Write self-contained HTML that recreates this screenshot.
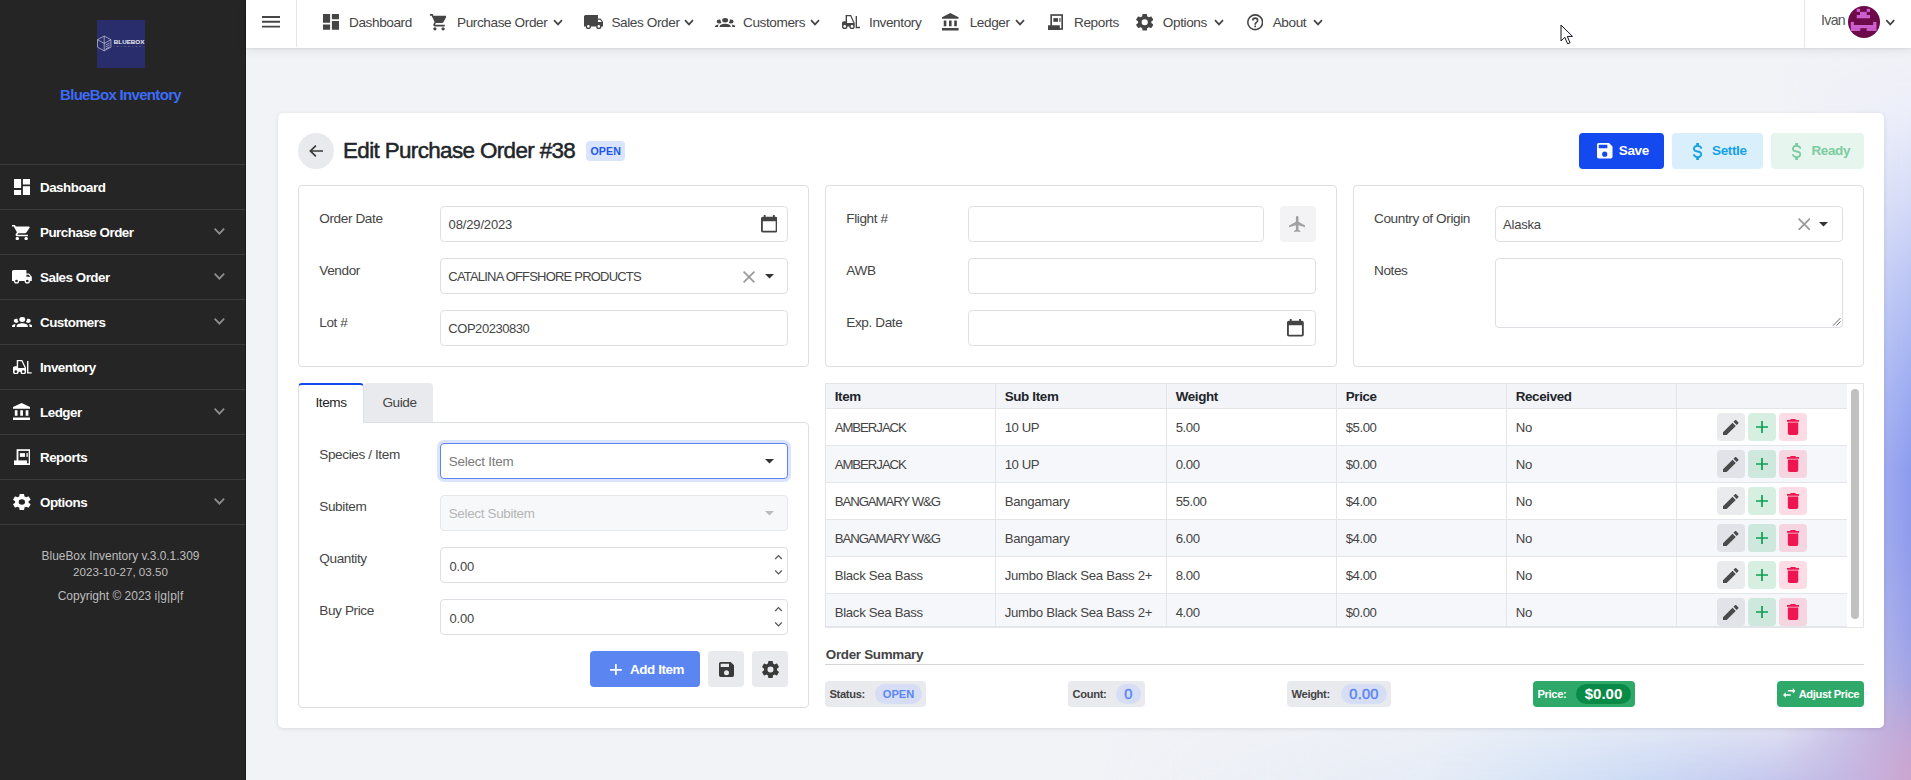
<!DOCTYPE html><html><head><meta charset="utf-8"><style>*{box-sizing:border-box;margin:0;padding:0}
html,body{width:1911px;height:780px;overflow:hidden}
body{position:relative;background:#f2f3f7;font-family:"Liberation Sans",sans-serif;color:#444}
.a{position:absolute}
.t{position:absolute;line-height:1;white-space:nowrap}
svg{display:block}
#blob{position:absolute;left:0;top:0;width:1911px;height:780px;overflow:hidden}
#rs{position:absolute;left:1780px;top:40px;width:131px;height:740px;
 -webkit-mask-image:linear-gradient(to right, transparent 0px, rgba(0,0,0,0.8) 100px, #000 131px);
 background:linear-gradient(to bottom, rgba(236,238,249,0) 0px, #eceef9 70px, #d8ddf7 150px, #b8c3f4 250px, #9dabf1 350px, #8d9bee 430px, #8f9bec 500px, #9ca2e7 600px, #aea6de 680px, #bea7d6 740px);}
#rs2{display:none}
#bs{position:absolute;left:1100px;top:680px;width:811px;height:100px;
 -webkit-mask-image:linear-gradient(to bottom, transparent 0px, rgba(0,0,0,0.45) 48px, rgba(0,0,0,0.75) 75px, #000 100px);
 background:linear-gradient(to right, rgba(234,238,246,0) 0px, #e6ecf6 330px, #d6e3f6 450px, #cbd8f4 560px, #c6caee 660px, #c3b6e2 750px, #cca6d0 811px);}
#side{position:absolute;left:0;top:0;width:246px;height:780px;background:#252526;border-right:1px solid #1c1c1c}
.mi{position:absolute;left:0;width:245px;height:45px;border-bottom:1px solid #3a3a3b}
.mi .tx{position:absolute;left:40px;top:15.7px;letter-spacing:-0.5px;font-size:13.4px;font-weight:bold;color:#fff;line-height:1;white-space:nowrap}
#top{position:absolute;left:0;top:0;width:1911px;height:48px}
#topbg{position:absolute;left:246px;top:0;width:1665px;height:48px;background:#fff;box-shadow:0 1px 2px rgba(0,0,0,0.06),0 3px 10px rgba(0,0,0,0.07)}
.nv{font-size:13.6px;letter-spacing:-0.4px;color:#454545}
#card{position:absolute;left:278px;top:113px;width:1606px;height:615px;background:#fff;border-radius:5px;box-shadow:0 1px 4px rgba(0,0,0,0.10)}
.pn{position:absolute;border:1px solid #dcdfe4;border-radius:4px;background:#fff}
.in{position:absolute;border:1px solid #dcdfe4;border-radius:4px;background:#fff;height:36px}
.lb{font-size:13px;color:#444}
.iv{font-size:12.4px;color:#444}
</style></head><body>
<div id="blob"><div id="rs"></div><div id="rs2"></div><div id="bs"></div></div>
<div id="side">
<div class="a" style="left:97px;top:20px;width:48px;height:48px;background:#2a2d6b">
<svg class="a" style="left:0;top:0" width="48" height="48" viewBox="0 0 48 48">
<g fill="none" stroke="#e4e4ee" stroke-width="0.6">
<path d="M7.2,16 L0.5,19.7 L0.5,27.2 L7.2,30.8 L13.9,27.2 L13.9,19.7 Z M0.5,19.7 L7.2,23.4 L13.9,19.7 M7.2,16 L7.2,30.8"/>
<path d="M8.6,25 L12.6,22.8 M8.6,27 L12.6,24.8 M8.6,29 L12.6,26.8"/>
</g>
<text x="16.8" y="24.3" font-family="Liberation Sans" font-weight="bold" font-size="6" fill="#f0f0f6" textLength="30.6" lengthAdjust="spacingAndGlyphs">BLUEBOX</text>
<text x="17" y="27.2" font-family="Liberation Sans" font-size="1.9" fill="#b8b8d0" textLength="30.5" lengthAdjust="spacing">I N V E N T O R Y</text>
</svg></div>
<div class="t" style="left:60px;top:87.3px;font-size:15px;letter-spacing:-0.68px;font-weight:bold;color:#3c6bf7">BlueBox Inventory</div>
<div class="a" style="left:0;top:164px;width:245px;height:1px;background:#3a3a3b"></div>
<div class="mi" style="top:165px"><span class="tx">Dashboard</span></div>
<svg class="a" style="left:14px;top:178.7px" width="16" height="16.4" viewBox="3 3 18 18" preserveAspectRatio="none"><path fill="#fff" d="M13,3V9H21V3M13,21H21V11H13M3,21H11V15H3M3,13H11V3H3V13Z"/></svg>
<div class="mi" style="top:210px"><span class="tx">Purchase Order</span></div>
<svg class="a" style="left:12.3px;top:224.9px" width="17.7" height="15.1" viewBox="1 2 20 20" preserveAspectRatio="none"><path fill="#fff" d="M17,18C15.89,18 15,18.89 15,20A2,2 0 0,0 17,22A2,2 0 0,0 19,20C19,18.89 18.1,18 17,18M1,2V4H3L6.6,11.59L5.24,14.04C5.09,14.32 5,14.65 5,15A2,2 0 0,0 7,17H19V15H7.42A0.25,0.25 0 0,1 7.17,14.75C7.17,14.7 7.18,14.66 7.2,14.63L8.1,13H15.55C16.3,13 16.96,12.58 17.3,11.97L20.88,5.5C20.95,5.34 21,5.17 21,5A1,1 0 0,0 20,4H5.21L4.27,2M7,18C5.89,18 5,18.89 5,20A2,2 0 0,0 7,22A2,2 0 0,0 9,20C9,18.89 8.1,18 7,18Z"/></svg>
<svg class="a" style="left:214px;top:228.3px" width="10.8" height="7" viewBox="6 8.58 12 7.42" preserveAspectRatio="none"><path fill="#8d8d8d" d="M7.41,8.58L12,13.17L16.59,8.58L18,10L12,16L6,10L7.41,8.58Z"/></svg>
<div class="mi" style="top:255px"><span class="tx">Sales Order</span></div>
<svg class="a" style="left:12px;top:270px" width="19.8" height="13.6" viewBox="1 4 22 16" preserveAspectRatio="none"><path fill="#fff" d="M18,18.5A1.5,1.5 0 0,1 16.5,17A1.5,1.5 0 0,1 18,15.5A1.5,1.5 0 0,1 19.5,17A1.5,1.5 0 0,1 18,18.5M19.5,9.5L21.46,12H17V9.5M6,18.5A1.5,1.5 0 0,1 4.5,17A1.5,1.5 0 0,1 6,15.5A1.5,1.5 0 0,1 7.5,17A1.5,1.5 0 0,1 6,18.5M20,8H17V4H3C1.89,4 1,4.89 1,6V17H3A3,3 0 0,0 6,20A3,3 0 0,0 9,17H15A3,3 0 0,0 18,20A3,3 0 0,0 21,17H23V12L20,8Z"/></svg>
<svg class="a" style="left:214px;top:273.3px" width="10.8" height="7" viewBox="6 8.58 12 7.42" preserveAspectRatio="none"><path fill="#8d8d8d" d="M7.41,8.58L12,13.17L16.59,8.58L18,10L12,16L6,10L7.41,8.58Z"/></svg>
<div class="mi" style="top:300px"><span class="tx">Customers</span></div>
<svg class="a" style="left:11.8px;top:317px" width="20.5" height="10.2" viewBox="0 5.5 24 14.5" preserveAspectRatio="none"><path fill="#fff" d="M12,5.5A3.5,3.5 0 0,1 15.5,9A3.5,3.5 0 0,1 12,12.5A3.5,3.5 0 0,1 8.5,9A3.5,3.5 0 0,1 12,5.5M5,8C5.56,8 6.08,8.15 6.53,8.42C6.38,9.85 6.8,11.27 7.66,12.38C7.16,13.34 6.16,14 5,14A3,3 0 0,1 2,11A3,3 0 0,1 5,8M19,8A3,3 0 0,1 22,11A3,3 0 0,1 19,14C17.84,14 16.84,13.34 16.34,12.38C17.2,11.27 17.62,9.85 17.47,8.42C17.92,8.15 18.44,8 19,8M5.5,18.25C5.5,16.18 8.41,14.5 12,14.5C15.59,14.5 18.5,16.180 18.5,18.25V20H5.5V18.25M0,20V18.5C0,17.11 1.89,15.94 4.450,15.6C3.86,16.28 3.5,17.22 3.5,18.25V20H0M24,20H20.5V18.25C20.5,17.22 20.14,16.28 19.55,15.6C22.11,15.94 24,17.11 24,18.5V20Z"/></svg>
<svg class="a" style="left:214px;top:318.3px" width="10.8" height="7" viewBox="6 8.58 12 7.42" preserveAspectRatio="none"><path fill="#8d8d8d" d="M7.41,8.58L12,13.17L16.59,8.58L18,10L12,16L6,10L7.41,8.58Z"/></svg>
<div class="mi" style="top:345px"><span class="tx">Inventory</span></div>
<svg class="a" style="left:13px;top:359.8px" width="18.7" height="14.4" viewBox="2 4 20 16" preserveAspectRatio="none"><path fill="#fff" d="M6,4V11H4C2.89,11 2,11.89 2,13V17A3,3 0 0,0 5,20A3,3 0 0,0 8,17H10A3,3 0 0,0 13,20A3,3 0 0,0 16,17V13L12,4H6M17,5V19H22V17.5H18.5V5H17M7.5,5.5H11.2L14.5,13H7.5V5.5M5,15.5A1.5,1.5 0 0,1 6.5,17A1.5,1.5 0 0,1 5,18.5A1.5,1.5 0 0,1 3.5,17A1.5,1.5 0 0,1 5,15.5M13,15.5A1.5,1.5 0 0,1 14.5,17A1.5,1.5 0 0,1 13,18.5A1.5,1.5 0 0,1 11.5,17A1.5,1.5 0 0,1 13,15.5Z"/></svg>
<div class="mi" style="top:390px"><span class="tx">Ledger</span></div>
<svg class="a" style="left:13px;top:403px" width="17.2" height="16.9" viewBox="2 1 19 21" preserveAspectRatio="none"><path fill="#fff" d="M11.5,1L2,6V8H21V6M16,10V17H19V10M2,22H21V19H2M10,10V17H13V10M4,10V17H7V10H4Z"/></svg>
<svg class="a" style="left:214px;top:408.3px" width="10.8" height="7" viewBox="6 8.58 12 7.42" preserveAspectRatio="none"><path fill="#8d8d8d" d="M7.41,8.58L12,13.17L16.59,8.58L18,10L12,16L6,10L7.41,8.58Z"/></svg>
<div class="mi" style="top:435px"><span class="tx">Reports</span></div>
<svg class="a" style="left:13.7px;top:449px" width="16.5" height="16.2" viewBox="0 0 14.6 15.6" preserveAspectRatio="none"><rect x="3.1" y="1" width="10.7" height="13.6" fill="none" stroke="#fff" stroke-width="1.6"/><rect x="5.2" y="4" width="4.5" height="3.6" fill="#fff"/><rect x="11" y="4" width="1.2" height="3.6" fill="#fff"/><rect x="0" y="11" width="11.5" height="4.6" fill="#fff"/></svg>
<div class="mi" style="top:480px"><span class="tx">Options</span></div>
<svg class="a" style="left:13.3px;top:494px" width="17.7" height="16" viewBox="2.2 2 19.6 20" preserveAspectRatio="none"><path fill="#fff" d="M12,15.5A3.5,3.5 0 0,1 8.5,12A3.5,3.5 0 0,1 12,8.5A3.5,3.5 0 0,1 15.5,12A3.5,3.5 0 0,1 12,15.5M19.43,12.97C19.47,12.65 19.5,12.33 19.5,12C19.5,11.67 19.47,11.34 19.43,11L21.54,9.37C21.73,9.22 21.78,8.95 21.66,8.73L19.66,5.27C19.54,5.05 19.27,4.96 19.05,5.05L16.56,6.05C16.04,5.66 15.5,5.32 14.87,5.07L14.5,2.42C14.46,2.18 14.25,2 14,2H10C9.75,2 9.54,2.18 9.5,2.42L9.13,5.07C8.5,5.32 7.96,5.66 7.44,6.05L4.95,5.05C4.73,4.96 4.460,5.05 4.34,5.27L2.34,8.73C2.21,8.95 2.27,9.22 2.46,9.37L4.57,11C4.53,11.34 4.5,11.67 4.5,12C4.5,12.33 4.53,12.65 4.57,12.97L2.46,14.63C2.27,14.78 2.21,15.05 2.34,15.27L4.34,18.73C4.46,18.95 4.73,19.03 4.95,18.95L7.44,17.94C7.96,18.34 8.5,18.68 9.13,18.93L9.5,21.58C9.54,21.82 9.75,22 10,22H14C14.25,22 14.46,21.82 14.5,21.58L14.87,18.93C15.5,18.67 16.04,18.34 16.56,17.94L19.05,18.95C19.27,19.03 19.54,18.95 19.66,18.73L21.66,15.27C21.78,15.05 21.73,14.78 21.54,14.63L19.43,12.97Z"/></svg>
<svg class="a" style="left:214px;top:498.3px" width="10.8" height="7" viewBox="6 8.58 12 7.42" preserveAspectRatio="none"><path fill="#8d8d8d" d="M7.41,8.58L12,13.17L16.59,8.58L18,10L12,16L6,10L7.41,8.58Z"/></svg>
<div class="t" style="left:0;width:241px;text-align:center;top:551px;font-size:11.9px;color:#bdbdbd">BlueBox Inventory v.3.0.1.309</div>
<div class="t" style="left:0;width:241px;text-align:center;top:566px;font-size:11.6px;color:#bdbdbd">2023-10-27, 03.50</div>
<div class="t" style="left:0;width:241px;text-align:center;top:590px;font-size:12px;color:#bdbdbd">Copyright © 2023 i|g|p|f</div>
</div>
<div id="top"><div id="topbg"></div>
<div class="a" style="left:296px;top:0;width:1px;height:47px;background:#e6e6e6"></div>
<div class="a" style="left:1804px;top:0;width:1px;height:47px;background:#e6e6e6"></div>
<svg class="a" style="left:262px;top:16px" width="18" height="11.6" viewBox="3 6 18 12" preserveAspectRatio="none"><path fill="#454545" d="M3,6H21V8H3V6M3,11H21V13H3V11M3,16H21V18H3V16Z"/></svg>
<div class="t nv" style="left:349px;top:15.5px">Dashboard</div>
<svg class="a" style="left:323px;top:14.1px" width="16" height="15.7" viewBox="3 3 18 18" preserveAspectRatio="none"><path fill="#454545" d="M13,3V9H21V3M13,21H21V11H13M3,21H11V15H3M3,13H11V3H3V13Z"/></svg>
<div class="t nv" style="left:457px;top:15.5px">Purchase Order</div>
<svg class="a" style="left:429.6px;top:14px" width="16.4" height="16.5" viewBox="1 2 20 20" preserveAspectRatio="none"><path fill="#454545" d="M17,18C15.89,18 15,18.89 15,20A2,2 0 0,0 17,22A2,2 0 0,0 19,20C19,18.89 18.1,18 17,18M1,2V4H3L6.6,11.59L5.24,14.04C5.09,14.32 5,14.65 5,15A2,2 0 0,0 7,17H19V15H7.42A0.25,0.25 0 0,1 7.17,14.75C7.17,14.7 7.18,14.66 7.2,14.63L8.1,13H15.55C16.3,13 16.96,12.58 17.3,11.97L20.88,5.5C20.95,5.34 21,5.17 21,5A1,1 0 0,0 20,4H5.21L4.27,2M7,18C5.89,18 5,18.89 5,20A2,2 0 0,0 7,22A2,2 0 0,0 9,20C9,18.89 8.1,18 7,18Z"/></svg>
<svg class="a" style="left:553px;top:18.5px" width="10" height="7" viewBox="0 0 10 7"><path d="M1,1.2 L5,5.4 L9,1.2" fill="none" stroke="#454545" stroke-width="1.7"/></svg>
<div class="t nv" style="left:611.4px;top:15.5px">Sales Order</div>
<svg class="a" style="left:583.8px;top:15px" width="19.2" height="14" viewBox="1 4 22 16" preserveAspectRatio="none"><path fill="#454545" d="M18,18.5A1.5,1.5 0 0,1 16.5,17A1.5,1.5 0 0,1 18,15.5A1.5,1.5 0 0,1 19.5,17A1.5,1.5 0 0,1 18,18.5M19.5,9.5L21.46,12H17V9.5M6,18.5A1.5,1.5 0 0,1 4.5,17A1.5,1.5 0 0,1 6,15.5A1.5,1.5 0 0,1 7.5,17A1.5,1.5 0 0,1 6,18.5M20,8H17V4H3C1.89,4 1,4.89 1,6V17H3A3,3 0 0,0 6,20A3,3 0 0,0 9,17H15A3,3 0 0,0 18,20A3,3 0 0,0 21,17H23V12L20,8Z"/></svg>
<svg class="a" style="left:684px;top:18.5px" width="10" height="7" viewBox="0 0 10 7"><path d="M1,1.2 L5,5.4 L9,1.2" fill="none" stroke="#454545" stroke-width="1.7"/></svg>
<div class="t nv" style="left:743px;top:15.5px">Customers</div>
<svg class="a" style="left:714.7px;top:18px" width="20.3" height="9.3" viewBox="0 5.5 24 14.5" preserveAspectRatio="none"><path fill="#454545" d="M12,5.5A3.5,3.5 0 0,1 15.5,9A3.5,3.5 0 0,1 12,12.5A3.5,3.5 0 0,1 8.5,9A3.5,3.5 0 0,1 12,5.5M5,8C5.56,8 6.08,8.15 6.53,8.42C6.38,9.85 6.8,11.27 7.66,12.38C7.16,13.34 6.16,14 5,14A3,3 0 0,1 2,11A3,3 0 0,1 5,8M19,8A3,3 0 0,1 22,11A3,3 0 0,1 19,14C17.84,14 16.84,13.34 16.34,12.38C17.2,11.27 17.62,9.85 17.47,8.42C17.92,8.15 18.44,8 19,8M5.5,18.25C5.5,16.18 8.41,14.5 12,14.5C15.59,14.5 18.5,16.180 18.5,18.25V20H5.5V18.25M0,20V18.5C0,17.11 1.89,15.94 4.450,15.6C3.86,16.28 3.5,17.22 3.5,18.25V20H0M24,20H20.5V18.25C20.5,17.22 20.14,16.28 19.55,15.6C22.11,15.94 24,17.11 24,18.5V20Z"/></svg>
<svg class="a" style="left:810px;top:18.5px" width="10" height="7" viewBox="0 0 10 7"><path d="M1,1.2 L5,5.4 L9,1.2" fill="none" stroke="#454545" stroke-width="1.7"/></svg>
<div class="t nv" style="left:869px;top:15.5px">Inventory</div>
<svg class="a" style="left:841.6px;top:15px" width="18.2" height="14" viewBox="2 4 20 16" preserveAspectRatio="none"><path fill="#454545" d="M6,4V11H4C2.89,11 2,11.89 2,13V17A3,3 0 0,0 5,20A3,3 0 0,0 8,17H10A3,3 0 0,0 13,20A3,3 0 0,0 16,17V13L12,4H6M17,5V19H22V17.5H18.5V5H17M7.5,5.5H11.2L14.5,13H7.5V5.5M5,15.5A1.5,1.5 0 0,1 6.5,17A1.5,1.5 0 0,1 5,18.5A1.5,1.5 0 0,1 3.5,17A1.5,1.5 0 0,1 5,15.5M13,15.5A1.5,1.5 0 0,1 14.5,17A1.5,1.5 0 0,1 13,18.5A1.5,1.5 0 0,1 11.5,17A1.5,1.5 0 0,1 13,15.5Z"/></svg>
<div class="t nv" style="left:969.7px;top:15.5px">Ledger</div>
<svg class="a" style="left:942.4px;top:13px" width="16.6" height="17.5" viewBox="2 1 19 21" preserveAspectRatio="none"><path fill="#454545" d="M11.5,1L2,6V8H21V6M16,10V17H19V10M2,22H21V19H2M10,10V17H13V10M4,10V17H7V10H4Z"/></svg>
<svg class="a" style="left:1014.6px;top:18.5px" width="10" height="7" viewBox="0 0 10 7"><path d="M1,1.2 L5,5.4 L9,1.2" fill="none" stroke="#454545" stroke-width="1.7"/></svg>
<div class="t nv" style="left:1074px;top:15.5px">Reports</div>
<svg class="a" style="left:1048px;top:14px" width="15" height="16" viewBox="0 0 14.6 15.6" preserveAspectRatio="none"><rect x="3.1" y="1" width="10.7" height="13.6" fill="none" stroke="#454545" stroke-width="1.6"/><rect x="5.2" y="4" width="4.5" height="3.6" fill="#454545"/><rect x="11" y="4" width="1.2" height="3.6" fill="#454545"/><rect x="0" y="11" width="11.5" height="4.6" fill="#454545"/></svg>
<div class="t nv" style="left:1162.8px;top:15.5px">Options</div>
<svg class="a" style="left:1136px;top:14px" width="17.4" height="16.5" viewBox="2.2 2 19.6 20" preserveAspectRatio="none"><path fill="#454545" d="M12,15.5A3.5,3.5 0 0,1 8.5,12A3.5,3.5 0 0,1 12,8.5A3.5,3.5 0 0,1 15.5,12A3.5,3.5 0 0,1 12,15.5M19.43,12.97C19.47,12.65 19.5,12.33 19.5,12C19.5,11.67 19.47,11.34 19.43,11L21.54,9.37C21.73,9.22 21.78,8.95 21.66,8.73L19.66,5.27C19.54,5.05 19.27,4.96 19.05,5.05L16.56,6.05C16.04,5.66 15.5,5.32 14.87,5.07L14.5,2.42C14.46,2.18 14.25,2 14,2H10C9.75,2 9.54,2.18 9.5,2.42L9.13,5.07C8.5,5.32 7.96,5.66 7.44,6.05L4.95,5.05C4.73,4.96 4.460,5.05 4.34,5.27L2.34,8.73C2.21,8.95 2.27,9.22 2.46,9.37L4.57,11C4.53,11.34 4.5,11.67 4.5,12C4.5,12.33 4.53,12.65 4.57,12.97L2.46,14.63C2.27,14.78 2.21,15.05 2.34,15.27L4.34,18.73C4.46,18.95 4.73,19.03 4.95,18.95L7.44,17.94C7.96,18.34 8.5,18.68 9.13,18.93L9.5,21.58C9.54,21.82 9.75,22 10,22H14C14.25,22 14.46,21.82 14.5,21.58L14.87,18.93C15.5,18.67 16.04,18.34 16.56,17.94L19.05,18.95C19.27,19.03 19.54,18.95 19.66,18.73L21.66,15.27C21.78,15.05 21.73,14.78 21.54,14.63L19.43,12.97Z"/></svg>
<svg class="a" style="left:1213.7px;top:18.5px" width="10" height="7" viewBox="0 0 10 7"><path d="M1,1.2 L5,5.4 L9,1.2" fill="none" stroke="#454545" stroke-width="1.7"/></svg>
<div class="t nv" style="left:1272.7px;top:15.5px">About</div>
<svg class="a" style="left:1246.6px;top:14px" width="16.4" height="16.5" viewBox="2 2 20 20" preserveAspectRatio="none"><path fill="#454545" d="M11,18H13V16H11V18M12,2A10,10 0 0,0 2,12A10,10 0 0,0 12,22A10,10 0 0,0 22,12A10,10 0 0,0 12,2M12,20C7.59,20 4,16.41 4,12C4,7.59 7.59,4 12,4C16.41,4 20,7.59 20,12C20,16.41 16.41,20 12,20M12,6A4,4 0 0,0 8,10H10A2,2 0 0,1 12,8A2,2 0 0,1 14,10C14,12 11,11.75 11,15H13C13,12.75 16,12.5 16,10A4,4 0 0,0 12,6Z"/></svg>
<svg class="a" style="left:1313px;top:18.5px" width="10" height="7" viewBox="0 0 10 7"><path d="M1,1.2 L5,5.4 L9,1.2" fill="none" stroke="#454545" stroke-width="1.7"/></svg>
<div class="t nv" style="left:1821px;top:13.4px;font-size:14.2px;letter-spacing:-0.7px;color:#555">Ivan</div>
<svg class="a" style="left:1885px;top:18.5px" width="10.5" height="7" viewBox="0 0 10 7"><path d="M1,1.2 L5,5.4 L9,1.2" fill="none" stroke="#454545" stroke-width="1.7"/></svg>
<svg class="a" style="left:1848px;top:6px" width="32" height="32" viewBox="0 0 32 32">
<circle cx="16" cy="16" r="16" fill="#6d0a4a"/>
<g fill="#cc5fcc">
<rect x="8.7" y="2.8" width="3.35" height="3.1"/><rect x="18.7" y="2.8" width="3.35" height="3.1"/>
<rect x="12" y="5.9" width="6.7" height="3.2"/><rect x="8.7" y="9" width="13.35" height="3.3"/>
<rect x="2.8" y="15.9" width="3.1" height="3.2"/><rect x="25.1" y="15.9" width="3.4" height="3.2"/>
<rect x="2.8" y="19" width="25.7" height="3.2"/>
<rect x="2.8" y="22.1" width="9.5" height="2.8"/><rect x="18.7" y="22.1" width="9.8" height="2.8"/>
</g></svg>
<svg class="a" style="left:1559.5px;top:24.3px" width="14" height="22" viewBox="0 0 14 22">
<path d="M1,1 L1,17 L4.8,13.3 L7.6,19.8 L10,18.8 L7.3,12.4 L12.5,12.4 Z" fill="#fff" stroke="#15151f" stroke-width="1" stroke-linejoin="round"/>
</svg>
</div>
<div id="card"></div>
<div class="a" style="left:298px;top:133px;width:36px;height:36px;border-radius:50%;background:#e9eaee"></div>
<svg class="a" style="left:306px;top:141px" width="20" height="20" viewBox="0 0 20 20"><path d="M17,10 H4.6 M9.9,4.6 L4.4,10 L9.9,15.4" fill="none" stroke="#3a3a3a" stroke-width="1.7"/></svg>
<div class="t" style="left:343px;top:140.24px;font-size:22.4px;font-weight:normal;color:#212529;letter-spacing:-0.62px;-webkit-text-stroke:0.5px #212529;">Edit Purchase Order #38</div>
<div class="a" style="left:586px;top:141px;width:39px;height:20px;border-radius:4px;background:#dbe4fd"></div>
<div class="t" style="left:590.5px;top:146.23px;font-size:10.6px;font-weight:bold;color:#1a56e8;letter-spacing:0.1px;">OPEN</div>
<div class="a" style="left:1579px;top:133px;width:85px;height:36px;border-radius:4px;background:#1449ef"></div>
<svg class="a" style="left:1597px;top:143px" width="15.5" height="15.5" viewBox="3 3 18 18" preserveAspectRatio="none"><path fill="#fff" d="M15,9H5V5H15M12,19A3,3 0 0,1 9,16A3,3 0 0,1 12,13A3,3 0 0,1 15,16A3,3 0 0,1 12,19M17,3H5C3.89,3 3,3.9 3,5V19A2,2 0 0,0 5,21H19A2,2 0 0,0 21,19V7L17,3Z"/></svg>
<div class="t" style="left:1618.7px;top:144.37px;font-size:13.5px;font-weight:bold;color:#fff;letter-spacing:-0.3px;">Save</div>
<div class="a" style="left:1672px;top:133px;width:91px;height:36px;border-radius:4px;background:#d9effc"></div>
<svg class="a" style="left:1692.5px;top:142.5px" width="9.2" height="17" viewBox="7 3 10 18" preserveAspectRatio="none"><path fill="#17a2e8" d="M7,15H9C9,16.08 10.37,17 12,17C13.63,17 15,16.08 15,15C15,13.9 13.96,13.5 11.76,12.97C9.64,12.44 7,11.78 7,9C7,7.21 8.47,5.69 10.5,5.18V3H13.5V5.18C15.53,5.69 17,7.21 17,9H15C15,7.92 13.63,7 12,7C10.37,7 9,7.920 9,9C9,10.1 10.04,10.5 12.24,11.03C14.36,11.56 17,12.22 17,15C17,16.79 15.53,18.31 13.5,18.82V21H10.5V18.82C8.47,18.31 7,16.79 7,15Z"/></svg>
<div class="t" style="left:1712px;top:144.37px;font-size:13.5px;font-weight:bold;color:#17a2e8;letter-spacing:-0.35px;">Settle</div>
<div class="a" style="left:1771px;top:133px;width:93px;height:36px;border-radius:4px;background:#e6f5ee"></div>
<svg class="a" style="left:1791.5px;top:142.5px" width="9.2" height="17" viewBox="7 3 10 18" preserveAspectRatio="none"><path fill="#7dcba0" d="M7,15H9C9,16.08 10.37,17 12,17C13.63,17 15,16.08 15,15C15,13.9 13.96,13.5 11.76,12.97C9.64,12.44 7,11.78 7,9C7,7.21 8.47,5.69 10.5,5.18V3H13.5V5.18C15.53,5.69 17,7.21 17,9H15C15,7.92 13.63,7 12,7C10.37,7 9,7.920 9,9C9,10.1 10.04,10.5 12.24,11.03C14.36,11.56 17,12.22 17,15C17,16.79 15.53,18.31 13.5,18.82V21H10.5V18.82C8.47,18.31 7,16.79 7,15Z"/></svg>
<div class="t" style="left:1811.4px;top:144.37px;font-size:13.5px;font-weight:bold;color:#7dcba0;letter-spacing:-0.35px;">Ready</div>
<div class="a" style="left:298px;top:185px;width:511px;height:182px;border:1px solid #dcdfe4;border-radius:4px;background:#fff"></div>
<div class="a" style="left:825px;top:185px;width:512px;height:182px;border:1px solid #dcdfe4;border-radius:4px;background:#fff"></div>
<div class="a" style="left:1353px;top:185px;width:511px;height:182px;border:1px solid #dcdfe4;border-radius:4px;background:#fff"></div>
<div class="t" style="left:319.3px;top:211.79px;font-size:13.6px;font-weight:normal;color:#454545;letter-spacing:-0.4px;">Order Date</div>
<div class="a" style="left:440px;top:206px;width:348px;height:36px;border:1px solid #dcdfe4;border-radius:4px;background:#fff"></div>
<div class="t" style="left:319.3px;top:263.79px;font-size:13.6px;font-weight:normal;color:#454545;letter-spacing:-0.4px;">Vendor</div>
<div class="a" style="left:440px;top:258px;width:348px;height:36px;border:1px solid #dcdfe4;border-radius:4px;background:#fff"></div>
<div class="t" style="left:319.3px;top:315.79px;font-size:13.6px;font-weight:normal;color:#454545;letter-spacing:-0.4px;">Lot #</div>
<div class="a" style="left:440px;top:310px;width:348px;height:36px;border:1px solid #dcdfe4;border-radius:4px;background:#fff"></div>
<div class="t" style="left:448.6px;top:218.40px;font-size:13px;font-weight:normal;color:#444;letter-spacing:-0.15px;">08/29/2023</div>
<svg class="a" style="left:760.5px;top:215px" width="16.5" height="17.5" viewBox="3 1 18 20" preserveAspectRatio="none"><path fill="#444" d="M19,19H5V8H19V19M19,3H18V1H16V3H8V1H6V3H5C3.89,3 3,3.89 3,5V19A2,2 0 0,0 5,21H19A2,2 0 0,0 21,19V5A2,2 0 0,0 19,3Z"/></svg>
<div class="t" style="left:448.3px;top:270.40px;font-size:13px;font-weight:normal;color:#444;letter-spacing:-0.8px;">CATALINA OFFSHORE PRODUCTS</div>
<svg class="a" style="left:743.4px;top:270.7px" width="12" height="12" viewBox="5 5 14 14" preserveAspectRatio="none"><path fill="#9a9a9a" d="M19,6.41L17.59,5L12,10.59L6.41,5L5,6.41L10.59,12L5,17.59L6.41,19L12,13.41L17.59,19L19,17.59L13.41,12L19,6.41Z"/></svg>
<svg class="a" style="left:765px;top:274px" width="9" height="4.5" viewBox="7 10 10 5" preserveAspectRatio="none"><path fill="#333" d="M7,10L12,15L17,10H7Z"/></svg>
<div class="t" style="left:448.3px;top:322.40px;font-size:13px;font-weight:normal;color:#444;letter-spacing:-0.45px;">COP20230830</div>
<div class="t" style="left:846.3px;top:211.79px;font-size:13.6px;font-weight:normal;color:#454545;letter-spacing:-0.4px;">Flight #</div>
<div class="t" style="left:846.3px;top:263.79px;font-size:13.6px;font-weight:normal;color:#454545;letter-spacing:-0.4px;">AWB</div>
<div class="t" style="left:846.3px;top:315.79px;font-size:13.6px;font-weight:normal;color:#454545;letter-spacing:-0.4px;">Exp. Date</div>
<div class="a" style="left:968px;top:206px;width:296px;height:36px;border:1px solid #dcdfe4;border-radius:4px;background:#fff"></div>
<div class="a" style="left:1280px;top:206px;width:36px;height:36px;border-radius:4px;background:#f3f3f6"></div>
<svg class="a" style="left:1289px;top:215.8px" width="16.4" height="16.2" viewBox="2 2 19 20" preserveAspectRatio="none"><path fill="#a0a0a0" d="M21,16V14L13,9V3.5A1.5,1.5 0 0,0 11.5,2A1.5,1.5 0 0,0 10,3.5V9L2,14V16L10,13.5V19L8,20.5V22L11.5,21L15,22V20.5L13,19V13.5L21,16Z"/></svg>
<div class="a" style="left:968px;top:258px;width:348px;height:36px;border:1px solid #dcdfe4;border-radius:4px;background:#fff"></div>
<div class="a" style="left:968px;top:310px;width:348px;height:36px;border:1px solid #dcdfe4;border-radius:4px;background:#fff"></div>
<svg class="a" style="left:1287px;top:319px" width="16.8" height="17.5" viewBox="3 1 18 20" preserveAspectRatio="none"><path fill="#444" d="M19,19H5V8H19V19M19,3H18V1H16V3H8V1H6V3H5C3.89,3 3,3.89 3,5V19A2,2 0 0,0 5,21H19A2,2 0 0,0 21,19V5A2,2 0 0,0 19,3Z"/></svg>
<div class="t" style="left:1374px;top:211.79px;font-size:13.6px;font-weight:normal;color:#454545;letter-spacing:-0.4px;">Country of Origin</div>
<div class="t" style="left:1374px;top:263.79px;font-size:13.6px;font-weight:normal;color:#454545;letter-spacing:-0.4px;">Notes</div>
<div class="a" style="left:1495px;top:206px;width:348px;height:36px;border:1px solid #dcdfe4;border-radius:4px;background:#fff"></div>
<div class="t" style="left:1503px;top:218.00px;font-size:13px;font-weight:normal;color:#444;letter-spacing:-0.2px;">Alaska</div>
<svg class="a" style="left:1797.5px;top:217.5px" width="12.5" height="12.5" viewBox="5 5 14 14" preserveAspectRatio="none"><path fill="#9a9a9a" d="M19,6.41L17.59,5L12,10.59L6.41,5L5,6.41L10.59,12L5,17.59L6.41,19L12,13.41L17.59,19L19,17.59L13.41,12L19,6.41Z"/></svg>
<svg class="a" style="left:1819px;top:222px" width="9" height="4.5" viewBox="7 10 10 5" preserveAspectRatio="none"><path fill="#333" d="M7,10L12,15L17,10H7Z"/></svg>
<div class="a" style="left:1495px;top:258px;width:348px;height:70px;border:1px solid #dcdfe4;border-radius:4px;background:#fff"></div>
<svg class="a" style="left:1832px;top:317px" width="9" height="9" viewBox="0 0 9 9"><path d="M8.5,1 L1,8.5 M8.5,4.5 L4.5,8.5" stroke="#555" stroke-width="0.9"/></svg>
<div class="a" style="left:298px;top:422px;width:511px;height:286px;border:1px solid #dcdfe4;border-radius:0 4px 4px 4px;background:#fff"></div>
<div class="a" style="left:298px;top:383px;width:66px;height:40px;border:1px solid #dcdfe4;border-bottom:none;border-top:2px solid #1449ef;border-radius:4px 4px 0 0;background:#fff"></div>
<div class="a" style="left:364px;top:383px;width:69px;height:39px;border-radius:4px 4px 0 0;background:#e9eaee"></div>
<div class="t" style="left:315.4px;top:396.29px;font-size:13.6px;font-weight:normal;color:#222;letter-spacing:-0.4px;">Items</div>
<div class="t" style="left:382.4px;top:396.29px;font-size:13.6px;font-weight:normal;color:#454545;letter-spacing:-0.4px;">Guide</div>
<div class="t" style="left:319.3px;top:448.09px;font-size:13.6px;font-weight:normal;color:#454545;letter-spacing:-0.4px;">Species / Item</div>
<div class="t" style="left:319.3px;top:500.09px;font-size:13.6px;font-weight:normal;color:#454545;letter-spacing:-0.4px;">Subitem</div>
<div class="t" style="left:319.3px;top:552.09px;font-size:13.6px;font-weight:normal;color:#454545;letter-spacing:-0.4px;">Quantity</div>
<div class="t" style="left:319.3px;top:604.09px;font-size:13.6px;font-weight:normal;color:#454545;letter-spacing:-0.4px;">Buy Price</div>
<div class="a" style="left:440px;top:443px;width:348px;height:36px;border:1px solid #5b86f2;border-radius:4px;background:#fff;box-shadow:0 0 0 3px rgba(91,134,242,0.22)"></div>
<div class="t" style="left:448.7px;top:454.66px;font-size:13.4px;font-weight:normal;color:#7a7a7a;letter-spacing:-0.2px;">Select Item</div>
<svg class="a" style="left:765px;top:459px" width="9" height="4.5" viewBox="7 10 10 5" preserveAspectRatio="none"><path fill="#333" d="M7,10L12,15L17,10H7Z"/></svg>
<div class="a" style="left:440px;top:495px;width:348px;height:36px;border:1px solid #e6e8ec;border-radius:4px;background:#f7f8fa"></div>
<div class="t" style="left:448.7px;top:506.66px;font-size:13.4px;font-weight:normal;color:#b5b5b5;letter-spacing:-0.3px;">Select Subitem</div>
<svg class="a" style="left:765px;top:511px" width="9" height="4.5" viewBox="7 10 10 5" preserveAspectRatio="none"><path fill="#bbb" d="M7,10L12,15L17,10H7Z"/></svg>
<div class="a" style="left:440px;top:547px;width:348px;height:36px;border:1px solid #dcdfe4;border-radius:4px;background:#fff"></div>
<div class="t" style="left:449.6px;top:559.60px;font-size:13px;font-weight:normal;color:#444;letter-spacing:-0.25px;">0.00</div>
<svg class="a" style="left:774px;top:554px" width="9" height="22" viewBox="0 0 9 22"><path d="M1.2,5 L4.5,1.5 L7.8,5 M1.2,16.5 L4.5,20 L7.8,16.5" fill="none" stroke="#555" stroke-width="1.2"/></svg>
<div class="a" style="left:440px;top:599px;width:348px;height:36px;border:1px solid #dcdfe4;border-radius:4px;background:#fff"></div>
<div class="t" style="left:449.6px;top:611.60px;font-size:13px;font-weight:normal;color:#444;letter-spacing:-0.25px;">0.00</div>
<svg class="a" style="left:774px;top:606px" width="9" height="22" viewBox="0 0 9 22"><path d="M1.2,5 L4.5,1.5 L7.8,5 M1.2,16.5 L4.5,20 L7.8,16.5" fill="none" stroke="#555" stroke-width="1.2"/></svg>
<div class="a" style="left:590px;top:651px;width:110px;height:36px;border-radius:4px;background:#5b86f2"></div>
<svg class="a" style="left:610px;top:663.6px" width="11.8" height="11.8" viewBox="5 5 14 14" preserveAspectRatio="none"><path fill="#fff" d="M19,13H13V19H11V13H5V11H11V5H13V11H19V13Z"/></svg>
<div class="t" style="left:630px;top:663.36px;font-size:13.4px;font-weight:bold;color:#fff;letter-spacing:-0.4px;">Add Item</div>
<div class="a" style="left:708px;top:651px;width:36px;height:36px;border-radius:4px;background:#e9eaee"></div>
<svg class="a" style="left:718.5px;top:661.5px" width="15" height="15" viewBox="3 3 18 18" preserveAspectRatio="none"><path fill="#3a3a3a" d="M15,9H5V5H15M12,19A3,3 0 0,1 9,16A3,3 0 0,1 12,13A3,3 0 0,1 15,16A3,3 0 0,1 12,19M17,3H5C3.89,3 3,3.9 3,5V19A2,2 0 0,0 5,21H19A2,2 0 0,0 21,19V7L17,3Z"/></svg>
<div class="a" style="left:752px;top:651px;width:36px;height:36px;border-radius:4px;background:#e9eaee"></div>
<svg class="a" style="left:761.5px;top:661px" width="17" height="17" viewBox="2.2 2 19.6 20" preserveAspectRatio="none"><path fill="#3a3a3a" d="M12,15.5A3.5,3.5 0 0,1 8.5,12A3.5,3.5 0 0,1 12,8.5A3.5,3.5 0 0,1 15.5,12A3.5,3.5 0 0,1 12,15.5M19.43,12.97C19.47,12.65 19.5,12.33 19.5,12C19.5,11.67 19.47,11.34 19.43,11L21.54,9.37C21.73,9.22 21.78,8.95 21.66,8.73L19.66,5.27C19.54,5.05 19.27,4.96 19.05,5.05L16.56,6.05C16.04,5.66 15.5,5.32 14.87,5.07L14.5,2.42C14.46,2.18 14.25,2 14,2H10C9.75,2 9.54,2.18 9.5,2.42L9.13,5.07C8.5,5.32 7.96,5.66 7.44,6.05L4.95,5.05C4.73,4.96 4.460,5.05 4.34,5.27L2.34,8.73C2.21,8.95 2.27,9.22 2.46,9.37L4.57,11C4.53,11.34 4.5,11.67 4.5,12C4.5,12.33 4.53,12.65 4.57,12.97L2.46,14.63C2.27,14.78 2.21,15.05 2.34,15.27L4.34,18.73C4.46,18.95 4.73,19.03 4.95,18.95L7.44,17.94C7.96,18.34 8.5,18.68 9.13,18.93L9.5,21.58C9.54,21.82 9.75,22 10,22H14C14.25,22 14.46,21.82 14.5,21.58L14.87,18.93C15.5,18.67 16.04,18.34 16.56,17.94L19.05,18.95C19.27,19.03 19.54,18.95 19.66,18.73L21.66,15.27C21.78,15.05 21.73,14.78 21.54,14.63L19.43,12.97Z"/></svg>
<div class="a" style="left:825px;top:383px;width:1039px;height:245px;border:1px solid #e3e5ea;background:#fff;overflow:hidden">
</div>
<div class="a" style="left:826px;top:384px;width:1021px;height:25px;background:#f3f4f8;border-bottom:1px solid #e3e5ea"></div>
<div class="a" style="left:826px;top:409px;width:1021px;height:37px;background:#fff;border-bottom:1px solid #e3e5ea"></div>
<div class="a" style="left:826px;top:446px;width:1021px;height:37px;background:#f6f7fa;border-bottom:1px solid #e3e5ea"></div>
<div class="a" style="left:826px;top:483px;width:1021px;height:37px;background:#fff;border-bottom:1px solid #e3e5ea"></div>
<div class="a" style="left:826px;top:520px;width:1021px;height:37px;background:#f6f7fa;border-bottom:1px solid #e3e5ea"></div>
<div class="a" style="left:826px;top:557px;width:1021px;height:37px;background:#fff;border-bottom:1px solid #e3e5ea"></div>
<div class="a" style="left:826px;top:594px;width:1021px;height:33px;background:#f6f7fa;border-bottom:1px solid #e3e5ea"></div>
<div class="a" style="left:995px;top:384px;width:1px;height:243px;background:#e3e5ea"></div>
<div class="a" style="left:1166px;top:384px;width:1px;height:243px;background:#e3e5ea"></div>
<div class="a" style="left:1336px;top:384px;width:1px;height:243px;background:#e3e5ea"></div>
<div class="a" style="left:1506px;top:384px;width:1px;height:243px;background:#e3e5ea"></div>
<div class="a" style="left:1676px;top:384px;width:1px;height:243px;background:#e3e5ea"></div>
<div class="t" style="left:834.7px;top:389.66px;font-size:13.4px;font-weight:bold;color:#212529;letter-spacing:-0.35px;">Item</div>
<div class="t" style="left:1004.7px;top:389.66px;font-size:13.4px;font-weight:bold;color:#212529;letter-spacing:-0.35px;">Sub Item</div>
<div class="t" style="left:1175.7px;top:389.66px;font-size:13.4px;font-weight:bold;color:#212529;letter-spacing:-0.35px;">Weight</div>
<div class="t" style="left:1345.7px;top:389.66px;font-size:13.4px;font-weight:bold;color:#212529;letter-spacing:-0.35px;">Price</div>
<div class="t" style="left:1515.7px;top:389.66px;font-size:13.4px;font-weight:bold;color:#212529;letter-spacing:-0.35px;">Received</div>
<div class="t" style="left:834.7px;top:421.03px;font-size:13.2px;font-weight:normal;color:#444;letter-spacing:-1.05px;">AMBERJACK</div>
<div class="t" style="left:1004.7px;top:421.03px;font-size:13.2px;font-weight:normal;color:#444;letter-spacing:-0.45px;">10 UP</div>
<div class="t" style="left:1175.7px;top:421.03px;font-size:13.2px;font-weight:normal;color:#444;letter-spacing:-0.45px;">5.00</div>
<div class="t" style="left:1345.7px;top:421.03px;font-size:13.2px;font-weight:normal;color:#444;letter-spacing:-0.45px;">$5.00</div>
<div class="t" style="left:1515.7px;top:421.03px;font-size:13.2px;font-weight:normal;color:#444;letter-spacing:-0.3px;">No</div>
<div class="a" style="left:1717px;top:413px;width:28px;height:28px;border-radius:4px;background:rgba(60,70,90,0.11)"></div>
<svg class="a" style="left:1723px;top:419.8px" width="15.6" height="15.4" viewBox="3 3 18.1 18" preserveAspectRatio="none"><path fill="#4a4a4a" d="M20.71,7.04C21.1,6.65 21.1,6 20.71,5.63L18.37,3.29C18,2.9 17.35,2.9 16.96,3.29L15.12,5.12L18.87,8.87M3,17.25V21H6.75L17.81,9.93L14.06,6.18L3,17.25Z"/></svg>
<div class="a" style="left:1748px;top:413px;width:28px;height:28px;border-radius:4px;background:rgba(20,160,80,0.17)"></div>
<svg class="a" style="left:1756px;top:421px" width="12" height="12" viewBox="5 5 14 14" preserveAspectRatio="none"><path fill="#0e9f55" d="M19,13H13V19H11V13H5V11H11V5H13V11H19V13Z"/></svg>
<div class="a" style="left:1779px;top:413px;width:28px;height:28px;border-radius:4px;background:rgba(240,20,80,0.15)"></div>
<svg class="a" style="left:1786.8px;top:419px" width="12.1" height="16" viewBox="5 3 14 18" preserveAspectRatio="none"><path fill="#ee1551" d="M19,4H15.5L14.5,3H9.5L8.5,4H5V6H19M6,19A2,2 0 0,0 8,21H16A2,2 0 0,0 18,19V7H6V19Z"/></svg>
<div class="t" style="left:834.7px;top:458.03px;font-size:13.2px;font-weight:normal;color:#444;letter-spacing:-1.05px;">AMBERJACK</div>
<div class="t" style="left:1004.7px;top:458.03px;font-size:13.2px;font-weight:normal;color:#444;letter-spacing:-0.45px;">10 UP</div>
<div class="t" style="left:1175.7px;top:458.03px;font-size:13.2px;font-weight:normal;color:#444;letter-spacing:-0.45px;">0.00</div>
<div class="t" style="left:1345.7px;top:458.03px;font-size:13.2px;font-weight:normal;color:#444;letter-spacing:-0.45px;">$0.00</div>
<div class="t" style="left:1515.7px;top:458.03px;font-size:13.2px;font-weight:normal;color:#444;letter-spacing:-0.3px;">No</div>
<div class="a" style="left:1717px;top:450px;width:28px;height:28px;border-radius:4px;background:rgba(60,70,90,0.11)"></div>
<svg class="a" style="left:1723px;top:456.8px" width="15.6" height="15.4" viewBox="3 3 18.1 18" preserveAspectRatio="none"><path fill="#4a4a4a" d="M20.71,7.04C21.1,6.65 21.1,6 20.71,5.63L18.37,3.29C18,2.9 17.35,2.9 16.96,3.29L15.12,5.12L18.87,8.87M3,17.25V21H6.75L17.81,9.93L14.06,6.18L3,17.25Z"/></svg>
<div class="a" style="left:1748px;top:450px;width:28px;height:28px;border-radius:4px;background:rgba(20,160,80,0.17)"></div>
<svg class="a" style="left:1756px;top:458px" width="12" height="12" viewBox="5 5 14 14" preserveAspectRatio="none"><path fill="#0e9f55" d="M19,13H13V19H11V13H5V11H11V5H13V11H19V13Z"/></svg>
<div class="a" style="left:1779px;top:450px;width:28px;height:28px;border-radius:4px;background:rgba(240,20,80,0.15)"></div>
<svg class="a" style="left:1786.8px;top:456px" width="12.1" height="16" viewBox="5 3 14 18" preserveAspectRatio="none"><path fill="#ee1551" d="M19,4H15.5L14.5,3H9.5L8.5,4H5V6H19M6,19A2,2 0 0,0 8,21H16A2,2 0 0,0 18,19V7H6V19Z"/></svg>
<div class="t" style="left:834.7px;top:495.03px;font-size:13.2px;font-weight:normal;color:#444;letter-spacing:-1.05px;">BANGAMARY W&amp;G</div>
<div class="t" style="left:1004.7px;top:495.03px;font-size:13.2px;font-weight:normal;color:#444;letter-spacing:-0.3px;">Bangamary</div>
<div class="t" style="left:1175.7px;top:495.03px;font-size:13.2px;font-weight:normal;color:#444;letter-spacing:-0.45px;">55.00</div>
<div class="t" style="left:1345.7px;top:495.03px;font-size:13.2px;font-weight:normal;color:#444;letter-spacing:-0.45px;">$4.00</div>
<div class="t" style="left:1515.7px;top:495.03px;font-size:13.2px;font-weight:normal;color:#444;letter-spacing:-0.3px;">No</div>
<div class="a" style="left:1717px;top:487px;width:28px;height:28px;border-radius:4px;background:rgba(60,70,90,0.11)"></div>
<svg class="a" style="left:1723px;top:493.8px" width="15.6" height="15.4" viewBox="3 3 18.1 18" preserveAspectRatio="none"><path fill="#4a4a4a" d="M20.71,7.04C21.1,6.65 21.1,6 20.71,5.63L18.37,3.29C18,2.9 17.35,2.9 16.96,3.29L15.12,5.12L18.87,8.87M3,17.25V21H6.75L17.81,9.93L14.06,6.18L3,17.25Z"/></svg>
<div class="a" style="left:1748px;top:487px;width:28px;height:28px;border-radius:4px;background:rgba(20,160,80,0.17)"></div>
<svg class="a" style="left:1756px;top:495px" width="12" height="12" viewBox="5 5 14 14" preserveAspectRatio="none"><path fill="#0e9f55" d="M19,13H13V19H11V13H5V11H11V5H13V11H19V13Z"/></svg>
<div class="a" style="left:1779px;top:487px;width:28px;height:28px;border-radius:4px;background:rgba(240,20,80,0.15)"></div>
<svg class="a" style="left:1786.8px;top:493px" width="12.1" height="16" viewBox="5 3 14 18" preserveAspectRatio="none"><path fill="#ee1551" d="M19,4H15.5L14.5,3H9.5L8.5,4H5V6H19M6,19A2,2 0 0,0 8,21H16A2,2 0 0,0 18,19V7H6V19Z"/></svg>
<div class="t" style="left:834.7px;top:532.03px;font-size:13.2px;font-weight:normal;color:#444;letter-spacing:-1.05px;">BANGAMARY W&amp;G</div>
<div class="t" style="left:1004.7px;top:532.03px;font-size:13.2px;font-weight:normal;color:#444;letter-spacing:-0.3px;">Bangamary</div>
<div class="t" style="left:1175.7px;top:532.03px;font-size:13.2px;font-weight:normal;color:#444;letter-spacing:-0.45px;">6.00</div>
<div class="t" style="left:1345.7px;top:532.03px;font-size:13.2px;font-weight:normal;color:#444;letter-spacing:-0.45px;">$4.00</div>
<div class="t" style="left:1515.7px;top:532.03px;font-size:13.2px;font-weight:normal;color:#444;letter-spacing:-0.3px;">No</div>
<div class="a" style="left:1717px;top:524px;width:28px;height:28px;border-radius:4px;background:rgba(60,70,90,0.11)"></div>
<svg class="a" style="left:1723px;top:530.8px" width="15.6" height="15.4" viewBox="3 3 18.1 18" preserveAspectRatio="none"><path fill="#4a4a4a" d="M20.71,7.04C21.1,6.65 21.1,6 20.71,5.63L18.37,3.29C18,2.9 17.35,2.9 16.96,3.29L15.12,5.12L18.87,8.87M3,17.25V21H6.75L17.81,9.93L14.06,6.18L3,17.25Z"/></svg>
<div class="a" style="left:1748px;top:524px;width:28px;height:28px;border-radius:4px;background:rgba(20,160,80,0.17)"></div>
<svg class="a" style="left:1756px;top:532px" width="12" height="12" viewBox="5 5 14 14" preserveAspectRatio="none"><path fill="#0e9f55" d="M19,13H13V19H11V13H5V11H11V5H13V11H19V13Z"/></svg>
<div class="a" style="left:1779px;top:524px;width:28px;height:28px;border-radius:4px;background:rgba(240,20,80,0.15)"></div>
<svg class="a" style="left:1786.8px;top:530px" width="12.1" height="16" viewBox="5 3 14 18" preserveAspectRatio="none"><path fill="#ee1551" d="M19,4H15.5L14.5,3H9.5L8.5,4H5V6H19M6,19A2,2 0 0,0 8,21H16A2,2 0 0,0 18,19V7H6V19Z"/></svg>
<div class="t" style="left:834.7px;top:569.03px;font-size:13.2px;font-weight:normal;color:#444;letter-spacing:-0.3px;">Black Sea Bass</div>
<div class="t" style="left:1004.7px;top:569.03px;font-size:13.2px;font-weight:normal;color:#444;letter-spacing:-0.3px;">Jumbo Black Sea Bass 2+</div>
<div class="t" style="left:1175.7px;top:569.03px;font-size:13.2px;font-weight:normal;color:#444;letter-spacing:-0.45px;">8.00</div>
<div class="t" style="left:1345.7px;top:569.03px;font-size:13.2px;font-weight:normal;color:#444;letter-spacing:-0.45px;">$4.00</div>
<div class="t" style="left:1515.7px;top:569.03px;font-size:13.2px;font-weight:normal;color:#444;letter-spacing:-0.3px;">No</div>
<div class="a" style="left:1717px;top:561px;width:28px;height:28px;border-radius:4px;background:rgba(60,70,90,0.11)"></div>
<svg class="a" style="left:1723px;top:567.8px" width="15.6" height="15.4" viewBox="3 3 18.1 18" preserveAspectRatio="none"><path fill="#4a4a4a" d="M20.71,7.04C21.1,6.65 21.1,6 20.71,5.63L18.37,3.29C18,2.9 17.35,2.9 16.96,3.29L15.12,5.12L18.87,8.87M3,17.25V21H6.75L17.81,9.93L14.06,6.18L3,17.25Z"/></svg>
<div class="a" style="left:1748px;top:561px;width:28px;height:28px;border-radius:4px;background:rgba(20,160,80,0.17)"></div>
<svg class="a" style="left:1756px;top:569px" width="12" height="12" viewBox="5 5 14 14" preserveAspectRatio="none"><path fill="#0e9f55" d="M19,13H13V19H11V13H5V11H11V5H13V11H19V13Z"/></svg>
<div class="a" style="left:1779px;top:561px;width:28px;height:28px;border-radius:4px;background:rgba(240,20,80,0.15)"></div>
<svg class="a" style="left:1786.8px;top:567px" width="12.1" height="16" viewBox="5 3 14 18" preserveAspectRatio="none"><path fill="#ee1551" d="M19,4H15.5L14.5,3H9.5L8.5,4H5V6H19M6,19A2,2 0 0,0 8,21H16A2,2 0 0,0 18,19V7H6V19Z"/></svg>
<div class="t" style="left:834.7px;top:606.03px;font-size:13.2px;font-weight:normal;color:#444;letter-spacing:-0.3px;">Black Sea Bass</div>
<div class="t" style="left:1004.7px;top:606.03px;font-size:13.2px;font-weight:normal;color:#444;letter-spacing:-0.3px;">Jumbo Black Sea Bass 2+</div>
<div class="t" style="left:1175.7px;top:606.03px;font-size:13.2px;font-weight:normal;color:#444;letter-spacing:-0.45px;">4.00</div>
<div class="t" style="left:1345.7px;top:606.03px;font-size:13.2px;font-weight:normal;color:#444;letter-spacing:-0.45px;">$0.00</div>
<div class="t" style="left:1515.7px;top:606.03px;font-size:13.2px;font-weight:normal;color:#444;letter-spacing:-0.3px;">No</div>
<div class="a" style="left:1717px;top:598px;width:28px;height:28px;border-radius:4px;background:rgba(60,70,90,0.11)"></div>
<svg class="a" style="left:1723px;top:604.8px" width="15.6" height="15.4" viewBox="3 3 18.1 18" preserveAspectRatio="none"><path fill="#4a4a4a" d="M20.71,7.04C21.1,6.65 21.1,6 20.71,5.63L18.37,3.29C18,2.9 17.35,2.9 16.96,3.29L15.12,5.12L18.87,8.87M3,17.25V21H6.75L17.81,9.93L14.06,6.18L3,17.25Z"/></svg>
<div class="a" style="left:1748px;top:598px;width:28px;height:28px;border-radius:4px;background:rgba(20,160,80,0.17)"></div>
<svg class="a" style="left:1756px;top:606px" width="12" height="12" viewBox="5 5 14 14" preserveAspectRatio="none"><path fill="#0e9f55" d="M19,13H13V19H11V13H5V11H11V5H13V11H19V13Z"/></svg>
<div class="a" style="left:1779px;top:598px;width:28px;height:28px;border-radius:4px;background:rgba(240,20,80,0.15)"></div>
<svg class="a" style="left:1786.8px;top:604px" width="12.1" height="16" viewBox="5 3 14 18" preserveAspectRatio="none"><path fill="#ee1551" d="M19,4H15.5L14.5,3H9.5L8.5,4H5V6H19M6,19A2,2 0 0,0 8,21H16A2,2 0 0,0 18,19V7H6V19Z"/></svg>
<div class="a" style="left:1851px;top:389px;width:8px;height:230px;border-radius:4px;background:#c1c1c1"></div>
<div class="t" style="left:825.8px;top:647.66px;font-size:13.4px;font-weight:bold;color:#444;letter-spacing:-0.3px;">Order Summary</div>
<div class="a" style="left:825px;top:663.5px;width:1039px;height:1px;background:#d5d5d5"></div>
<div class="a" style="left:825px;top:681px;width:101px;height:26px;border-radius:4px;background:#e9eaee"></div>
<div class="t" style="left:829.5px;top:689.12px;font-size:11.2px;font-weight:bold;color:#444;letter-spacing:-0.35px;">Status:</div>
<div class="a" style="left:875px;top:684px;width:47px;height:20px;border-radius:10px;background:#d6def5"></div>
<div class="t" style="left:875px;top:684px;width:47px;height:20px;line-height:20px;text-align:center;letter-spacing:0px;font-size:11.1px;font-weight:bold;color:#5b86f2;">OPEN</div>
<div class="a" style="left:1068px;top:681px;width:77px;height:26px;border-radius:4px;background:#e9eaee"></div>
<div class="t" style="left:1072.5px;top:689.12px;font-size:11.2px;font-weight:bold;color:#444;letter-spacing:-0.35px;">Count:</div>
<div class="a" style="left:1116px;top:684px;width:25px;height:20px;border-radius:10px;background:#d6def5"></div>
<div class="t" style="left:1116px;top:684px;width:25px;height:20px;line-height:21px;text-align:center;letter-spacing:0.25px;font-size:14.6px;font-weight:normal;color:#5b86f2;-webkit-text-stroke:0.45px #5b86f2">0</div>
<div class="a" style="left:1287px;top:681px;width:104px;height:26px;border-radius:4px;background:#e9eaee"></div>
<div class="t" style="left:1291.5px;top:689.12px;font-size:11.2px;font-weight:bold;color:#444;letter-spacing:-0.35px;">Weight:</div>
<div class="a" style="left:1341px;top:684px;width:46px;height:20px;border-radius:10px;background:#d6def5"></div>
<div class="t" style="left:1341px;top:684px;width:46px;height:20px;line-height:21px;text-align:center;letter-spacing:0.25px;font-size:14.6px;font-weight:normal;color:#5b86f2;-webkit-text-stroke:0.45px #5b86f2">0.00</div>
<div class="a" style="left:1533px;top:681px;width:102px;height:26px;border-radius:4px;background:#2ea96a"></div>
<div class="t" style="left:1537.5px;top:689.12px;font-size:11.2px;font-weight:bold;color:#fff;letter-spacing:-0.35px;">Price:</div>
<div class="a" style="left:1576px;top:684px;width:55px;height:20px;border-radius:10px;background:#0a8a47"></div>
<div class="t" style="left:1576px;top:684px;width:55px;height:20px;line-height:20px;text-align:center;letter-spacing:0px;font-size:15px;font-weight:bold;color:#fff;">$0.00</div>
<div class="a" style="left:1777px;top:681px;width:87px;height:26px;border-radius:4px;background:#2ea96a"></div>
<svg class="a" style="left:1782.7px;top:688px" width="12.6" height="9.8" viewBox="3 5 18 14" preserveAspectRatio="none"><path fill="#fff" d="M21,9L17,5V8H10V10H17V13M7,11L3,15L7,19V16H14V14H7V11Z"/></svg>
<div class="t" style="left:1798.7px;top:688.52px;font-size:11.2px;font-weight:bold;color:#fff;letter-spacing:-0.4px;">Adjust Price</div>
</body></html>
